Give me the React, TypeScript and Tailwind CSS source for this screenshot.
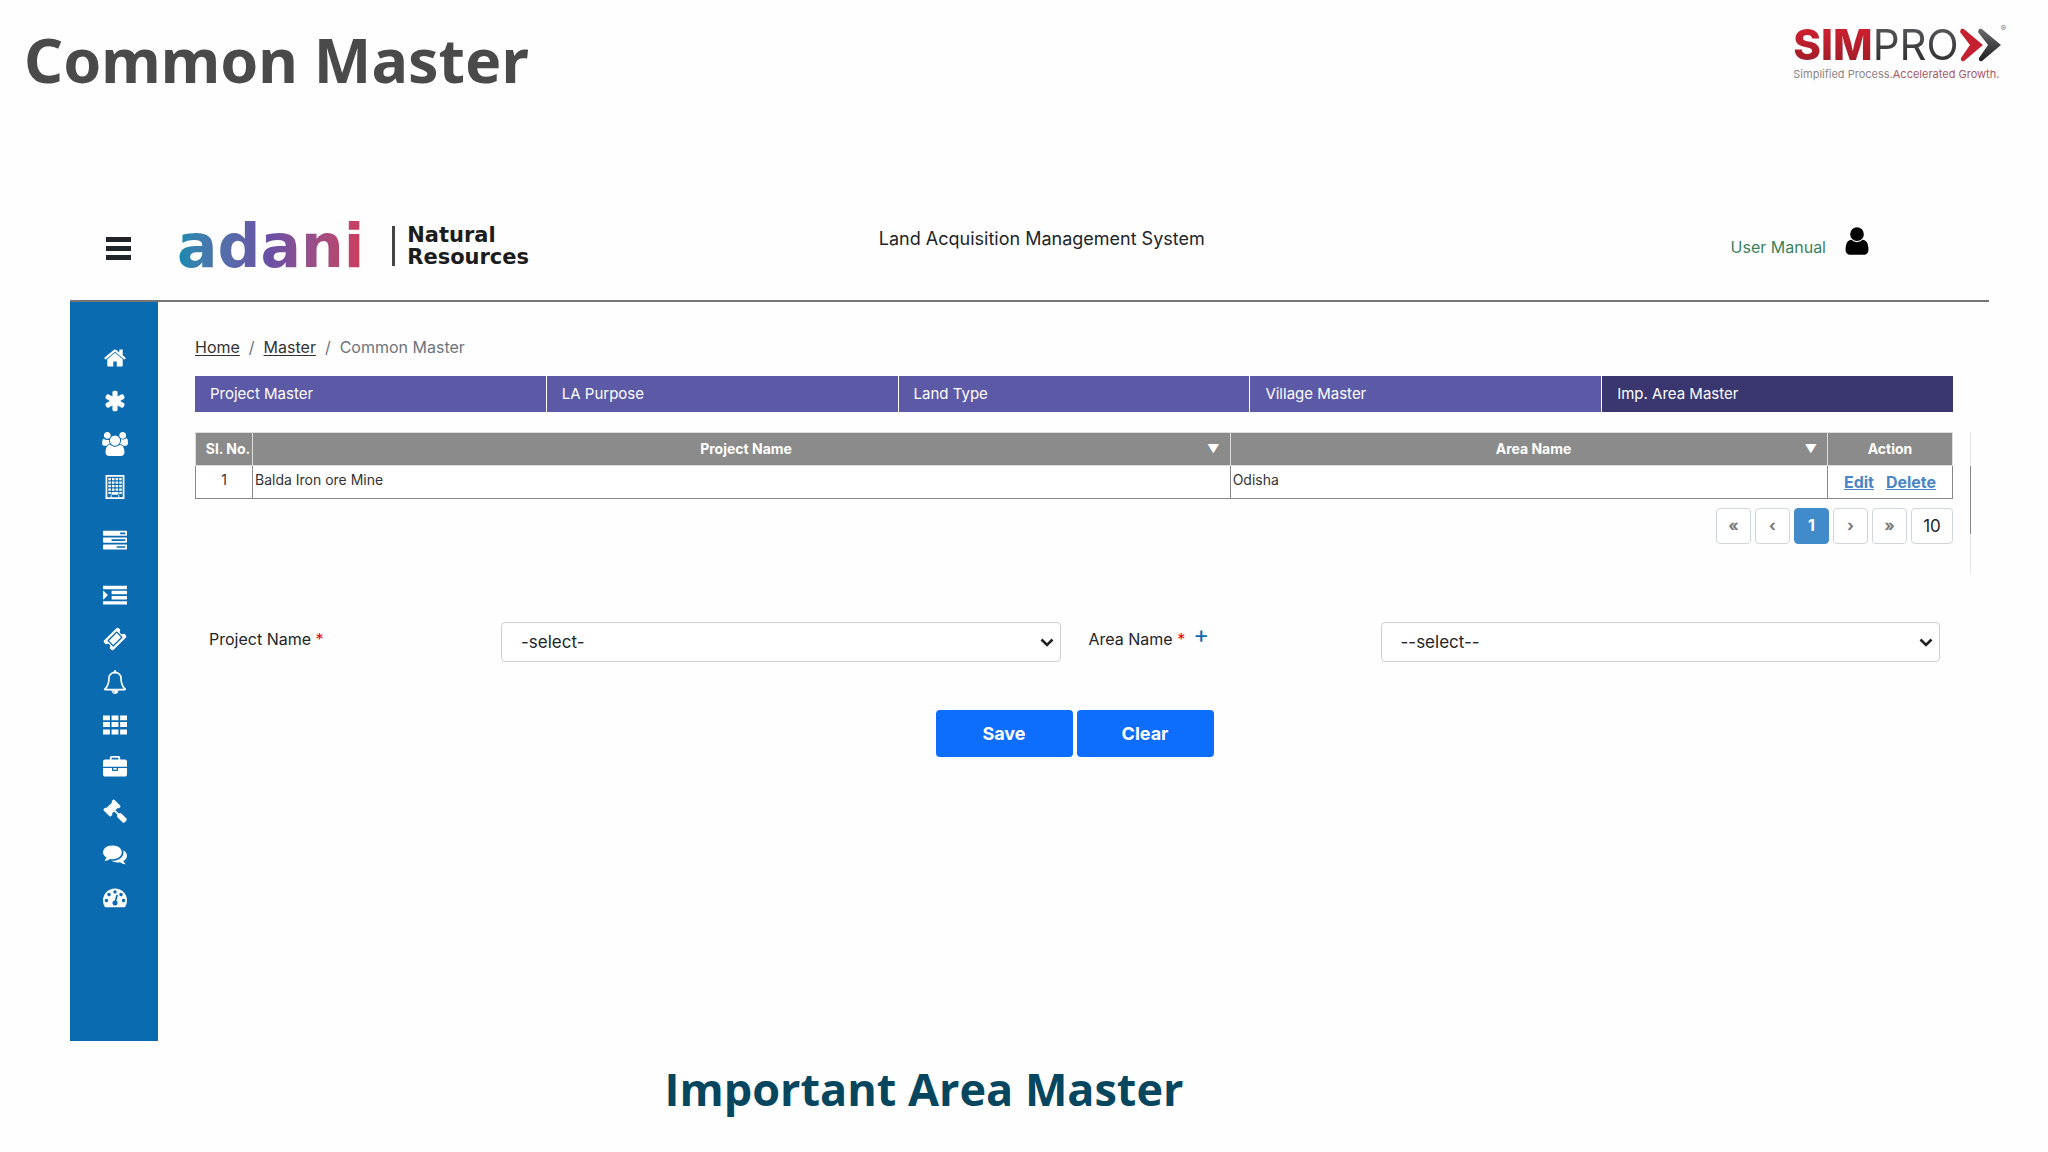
import { useState } from "react";
import clsx from "clsx";

const ICONS = {
  home: "M1472 992v480q0 26-19 45t-45 19h-384v-384h-256v384h-384q-26 0-45-19t-19-45v-480q0-1 .5-3t.5-3l575-474 575 474q1 2 1 6zm223-69l-62 74q-8 9-21 11h-3q-13 0-21-7l-692-577-692 577q-12 8-24 7-13-2-21-11l-62-74q-8-10-7-23.500t11-21.500l719-599q32-26 76-26t76 26l244 204v-195q0-14 9-23t23-9h192q14 0 23 9t9 23v408l219 182q10 8 11 21.500t-7 23.500z",
  asterisk:
    "M1546 1050q46 26 59.500 77.500t-12.500 97.500l-64 110q-26 46-77.500 59.500t-97.500-12.500l-266-153v307q0 52-38 90t-90 38h-128q-52 0-90-38t-38-90v-307l-266 153q-46 26-97.500 12.500t-77.500-59.500l-64-110q-26-46-12.500-97.500t59.500-77.500l266-154-266-154q-46-26-59.500-77.500t12.500-97.500l64-110q26-46 77.500-59.500t97.500 12.500l266 153v-307q0-52 38-90t90-38h128q52 0 90 38t38 90v307l266-153q46-26 97.500-12.500t77.500 59.500l64 110q26 46 12.500 97.500t-59.500 77.500l-266 154z",
  users:
    "M529 896q-162 5-265 128h-134q-82 0-138-40.500t-56-118.500q0-353 124-353 6 0 43.500 21t97.500 42.500 119 21.500q67 0 133-23-5 37-5 66 0 159 93 299zm1071 637q0 120-73 189.500t-194 69.500h-874q-121 0-194-69.500t-73-189.500q0-53 3.500-103.500t14-109 26.500-108.500 43-97.500 62-81 85.500-53.500 111.500-20q10 0 43 21.500t73 48 107 48 135 21.500 135-21.500 107-48 73-48 43-21.500q61 0 111.500 20t85.500 53.500 62 81 43 97.500 26.500 108.500 14 109 3.500 103.500zm-1024-1277q0 106-75 181t-181 75-181-75-75-181 75-181 181-75 181 75 75 181zm704 384q0 159-112.500 271.500t-271.500 112.500-271.500-112.500-112.500-271.500 112.500-271.500 271.500-112.500 271.500 112.500 112.500 271.500zm576 225q0 78-56 118.500t-138 40.500h-134q-103-123-265-128 93-140 93-299 0-29-5-66 66 23 133 23 59 0 119-21.500t97.500-42.500 43.500-21q124 0 124 353zm-128-609q0 106-75 181t-181 75-181-75-75-181 75-181 181-75 181 75 75 181z",
  building:
    "M192 0h1408v1792h-1408zM320 128v1536h256v-192h192v192h256v-192h192v192h256v-1536zM400 230h190v170h-190zM670 230h190v170h-190zM940 230h190v170h-190zM1210 230h190v170h-190zM400 490h190v170h-190zM670 490h190v170h-190zM940 490h190v170h-190zM1210 490h190v170h-190zM400 750h190v170h-190zM670 750h190v170h-190zM940 750h190v170h-190zM1210 750h190v170h-190zM400 1010h190v170h-190zM670 1010h190v170h-190zM940 1010h190v170h-190zM1210 1010h190v170h-190zM400 1270h190v140h-190zM1210 1270h190v140h-190zM640 1270h512v394h-128v-192h-256v192h-128z",
  tasks:
    "M1024 1408h640v-128h-640v128zm-384-512h1024v-128h-1024v128zm640-512h384v-128h-384v128zm512 832v256q0 26-19 45t-45 19h-1664q-26 0-45-19t-19-45v-256q0-26 19-45t45-19h1664q26 0 45 19t19 45zm0-512v256q0 26-19 45t-45 19h-1664q-26 0-45-19t-19-45v-256q0-26 19-45t45-19h1664q26 0 45 19t19 45zm0-512v256q0 26-19 45t-45 19h-1664q-26 0-45-19t-19-45v-256q0-26 19-45t45-19h1664q26 0 45 19t19 45z",
  indent:
    "M352 832q0 14-9 23l-288 288q-9 9-23 9-13 0-22.500-9.500t-9.500-22.500v-576q0-13 9.500-22.500t22.500-9.500q14 0 23 9l288 288q9 9 9 23zm1440 480v192q0 13-9.500 22.500t-22.500 9.500h-1728q-13 0-22.500-9.500t-9.500-22.500v-192q0-13 9.500-22.500t22.500-9.500h1728q13 0 22.500 9.500t9.500 22.500zm0-384v192q0 13-9.500 22.500t-22.500 9.500h-1088q-13 0-22.500-9.500t-9.500-22.500v-192q0-13 9.500-22.500t22.500-9.500h1088q13 0 22.500 9.500t9.500 22.500zm0-384v192q0 13-9.500 22.500t-22.500 9.500h-1088q-13 0-22.500-9.500t-9.500-22.500v-192q0-13 9.500-22.500t22.500-9.500h1088q13 0 22.500 9.500t9.500 22.500zm0-384v192q0 13-9.500 22.500t-22.500 9.500h-1728q-13 0-22.500-9.500t-9.500-22.500v-192q0-13 9.500-22.500t22.500-9.500h1728q13 0 22.500 9.500t9.500 22.500z",
  ticket:
    "M1024 452l316 316-572 572-316-316zm-211 979l618-618q19-19 19-45t-19-45l-362-362q-18-18-45-18t-45 18l-618 618q-19 19-19 45t19 45l362 362q18 18 45 18t45-18zm889-637l-907 908q-37 37-90.500 37t-90.500-37l-126-126q56-56 56-136t-56-136-136-56-136 56l-125-126q-37-37-37-90.500t37-90.500l907-906q37-37 90.500-37t90.500 37l125 125q-56 56-56 136t56 136 136 56 136-56l126 125q37 37 37 90.500t-37 90.500z",
  bell: "M912 1696q0-16-16-16-59 0-101.500-42.500t-42.500-101.500q0-16-16-16t-16 16q0 73 51.500 124.500t124.500 51.500q16 0 16-16zm-666-288h1300q-266-300-266-832 0-51-24-105t-69-103-121.500-80.500-169.500-31.500-169.500 31.500-121.500 80.500-69 103-24 105q0 532-266 832zm1482 0q0 52-38 90t-90 38h-448q0 106-75 181t-181 75-181-75-75-181h-448q-52 0-90-38t-38-90q50-42 91-88t85-119.500 74.500-158.500 50-206 19.500-260q0-152 117-282.500t307-158.500q-8-19-8-39 0-40 28-68t68-28 68 28 28 68q0 20-8 39 190 28 307 158.500t117 282.500q0 139 19.500 260t50 206 74.500 158.500 85 119.500 91 88z",
  grid: "M0 190h512v360h-512zM640 190h512v360h-512zM1280 190h512v360h-512zM0 680h512v360h-512zM640 680h512v360h-512zM1280 680h512v360h-512zM0 1240h512v360h-512zM640 1240h512v360h-512zM1280 1240h512v360h-512z",
  briefcase:
    "M640 256h512v-128h-512v128zm1152 640v480q0 66-47 113t-113 47h-1472q-66 0-113-47t-47-113v-480h672v160q0 26 19 45t45 19h320q26 0 45-19t19-45v-160h672zm-768 0v128h-256v-128h256zm768-480v384h-1792v-384q0-66 47-113t113-47h352v-160q0-40 28-68t68-28h576q40 0 68 28t28 68v160h352q66 0 113 47t47 113z",
  gavel:
    "M1771 1536q0 53-37 90l-107 108q-39 37-91 37-53 0-90-37l-363-364q-38-36-38-90 0-53 43-96l-256-256-126 126q-14 14-34 14t-34-14q2 2 12.500 12t12.500 13 10 11.500 10 13.500 6 13.500 5.500 16.500 1.500 18q0 38-28 68-3 3-16.500 18t-19 20.500-18.500 16.500-22 15.500-22 9-26 4.500q-40 0-68-28l-408-408q-28-28-28-68 0-13 4.500-26t9-22 15.500-22 16.500-18.500 20.500-19 18-16.500q30-28 68-28 10 0 18 1.500t16.500 5.500 13.500 6 13.500 10 11.500 10 13 12.500 12 12.500q-14-14-14-34t14-34l348-348q14-14 34-14t34 14q-2-2-12.500-12t-12.500-13-10-11.500-10-13.500-6-13.500-5.500-16.500-1.500-18q0-38 28-68 3-3 16.500-18t19-20.500 18.500-16.500 22-15.500 22-9 26-4.500q40 0 68 28l408 408q28 28 28 68 0 13-4.500 26t-9 22-15.500 22-16.500 18.500-20.500 19-18 16.500q-30 28-68 28-10 0-18-1.500t-16.500-5.500-13.500-6-13.500-10-11.500-10-13-12.500-12-12.500q14 14 14 34t-14 34l-126 126 256 256q43-43 96-43 52 0 91 37l363 363q37 39 37 91z",
  comments:
    "M1408 768q0 139-94 257t-256.500 186.500-353.500 68.500q-86 0-176-16-124 88-278 128-36 9-86 16h-3q-11 0-20.500-8t-11.500-21q-1-3-1-6.500t.5-6.500 2-6l2.500-5t3.500-5.500 4-5 4.500-5 4-4.500q5-6 23-25t26-29.500 22.500-29 25-38.500 20.500-44q-124-72-195-177t-71-224q0-139 94-257t256.500-186.500 353.500-68.500 353.500 68.500 256.500 186.500 94 257zm384 256q0 120-71 224.500t-195 176.500q10 24 20.500 44t25 38.500 22.500 29 26 29.500 23 25q1 1 4 4.500t4.500 5 4 5 3.500 5.500l2.500 5t2 6 .5 6.500-1 6.500q-3 14-13 22t-22 7q-50-7-86-16-154-40-278-128-90 16-176 16-271 0-472-132 58 4 88 4 161 0 309-45t264-129q125-92 192-212t67-254q0-77-23-152 129 71 204 178t75 230z",
  dashboard:
    "M384 1152q0-53-37.500-90.500t-90.500-37.500-90.500 37.500-37.500 90.500 37.500 90.500 90.500 37.500 90.500-37.500 37.500-90.500zm192-448q0-53-37.500-90.500t-90.500-37.500-90.500 37.500-37.500 90.500 37.500 90.500 90.500 37.500 90.500-37.500 37.500-90.500zm428 481l101-382q6-26-7.500-48.500t-38.500-29.500-48 6.500-30 39.500l-101 382q-60 5-107 43.500t-63 98.500q-20 77 20 146t117 89 146-20 89-117q16-60-6-117t-72-91zm660-33q0-53-37.500-90.500t-90.500-37.500-90.500 37.500-37.500 90.500 37.500 90.500 90.500 37.500 90.500-37.500 37.500-90.500zm-640-640q0-53-37.500-90.500t-90.500-37.500-90.500 37.500-37.500 90.500 37.500 90.500 90.500 37.500 90.500-37.500 37.500-90.500zm448 192q0-53-37.500-90.500t-90.500-37.500-90.500 37.500-37.500 90.500 37.500 90.500 90.500 37.500 90.500-37.500 37.500-90.500zm320 448q0 261-141 483-19 29-54 29h-1402q-35 0-54-29-141-221-141-483 0-182 71-348t191-286 286-191 348-71 348 71 286 191 191 286 71 348z",
  user: "M1536 1399q0 109-62.500 187t-150.500 78h-854q-88 0-150.500-78t-62.500-187q0-85 8.500-160.500t31.500-152 58.500-131 94-89 134.500-34.500q131 128 313 128t313-128q76 0 134.500 34.500t94 89 58.500 131 31.500 152 8.500 160.500zm-256-887q0 159-112.500 271.500t-271.500 112.500-271.500-112.500-112.500-271.500 112.500-271.500 271.500-112.500 271.500 112.500 112.500 271.500z",
};

type IconName = keyof typeof ICONS;

function Icon({ name, className }: { name: IconName; className?: string }) {
  return (
    <svg viewBox="0 0 1792 1792" className={clsx("overflow-visible fill-current", className)} aria-hidden="true">
      <path d={ICONS[name]} fillRule="evenodd" />
    </svg>
  );
}

const menu: { icon: IconName; label: string; height: string }[] = [
  { icon: "home", label: "Home", height: "h-[43px]" },
  { icon: "asterisk", label: "Master", height: "h-[43px]" },
  { icon: "users", label: "Users", height: "h-[43px]" },
  { icon: "building", label: "Projects", height: "h-[43px]" },
  { icon: "tasks", label: "Tasks", height: "h-[66px]" },
  { icon: "indent", label: "Records", height: "h-[43px]" },
  { icon: "ticket", label: "Tickets", height: "h-[43px]" },
  { icon: "bell", label: "Alerts", height: "h-[43px]" },
  { icon: "grid", label: "Modules", height: "h-[43px]" },
  { icon: "briefcase", label: "Assets", height: "h-[43px]" },
  { icon: "gavel", label: "Legal", height: "h-[43px]" },
  { icon: "comments", label: "Messages", height: "h-[43px]" },
  { icon: "dashboard", label: "Dashboard", height: "h-[43px]" },
];

const tabs = ["Project Master", "LA Purpose", "Land Type", "Village Master", "Imp. Area Master"];
const pages = ["«", "‹", "1", "›", "»"];

function SimproLogo() {
  return (
    <div className="font-[Inter,sans-serif]">
      <div className="flex h-[42px] items-center text-[42px] leading-[42px]">
        <span className="bg-linear-to-b from-[#d3202f] to-[#9c1c28] bg-clip-text font-extrabold text-transparent">SIM</span>
        <span className="bg-linear-to-b from-[#5a5a5c] to-[#2c2c2e] bg-clip-text text-transparent">PRO</span>
        <svg viewBox="0 0 42 34" className="h-[34px] w-[42px]" aria-hidden="true">
          <defs>
            <linearGradient id="chev" x1="0" y1="0" x2="0" y2="1">
              <stop offset="0" stopColor="#6a6a6c" />
              <stop offset="1" stopColor="#1f1f21" />
            </linearGradient>
          </defs>
          <path d="M2 1q2-1 4 1l18 15L5 33q-2 1-3-1v-2l9-13L1 4z" fill="#c4202f" />
          <path d="M20 1q2-1 4 1l18 15-19 16q-2 1-3-1v-2l9-13L19 4z" fill="url(#chev)" />
        </svg>
        <span className="self-start text-[8px] leading-none text-gray-500">®</span>
      </div>
      <p className="text-[11px] leading-4 text-[#8b8587]">
        Simplified Process.<span className="text-[#a4586a]">Accelerated Growth.</span>
      </p>
    </div>
  );
}

function AdaniLogo() {
  return (
    <div className="flex items-center font-['DejaVu_Sans',sans-serif] font-bold">
      <span className="bg-linear-to-r from-[#0a8bb0] via-[#6a4fa5] to-[#cf3a5c] bg-clip-text text-[60px] leading-[60px] text-transparent">
        adani
      </span>
      <span className="ml-7 h-10 w-[3px] bg-[#444]" />
      <span className="ml-3 text-[21px] leading-[22px] text-[#1c1c1c]">
        Natural
        <br />
        Resources
      </span>
    </div>
  );
}

function SelectBox({ id, placeholder }: { id: string; placeholder: string }) {
  return (
    <div className="relative min-w-0 flex-1">
      <select id={id} className="h-10 w-full appearance-none rounded-sm border border-[#ced0d6] bg-white px-[19px] pt-0.5 text-[17px]">
        <option>{placeholder}</option>
      </select>
      <svg viewBox="0 0 14 9" className="pointer-events-none absolute top-4 right-[7px] h-[9px] w-3.5" aria-hidden="true">
        <path d="M1.500 1.500L7 7l5.500-5.500" fill="none" stroke="#222" strokeWidth="2.600" />
      </svg>
    </div>
  );
}

export default function App() {
  const [activeTab, setActiveTab] = useState("Imp. Area Master");

  return (
    <div className="min-h-screen bg-[#fefefe] font-[Inter,sans-serif] text-[#212529]">
      <div className="flex h-[200px] items-start justify-between pt-6 pr-[42px] pl-6">
        <h1 className="font-['Noto_Sans',sans-serif] text-[61px] leading-[72px] font-bold text-[#4a4a4a]">Common Master</h1>
        <SimproLogo />
      </div>

      <div className="mr-[59px] ml-[70px]">
        <header className="flex h-[102px] items-start border-b-2 border-[#757575] pt-4 pl-9">
          <button type="button" aria-label="Toggle menu" className="mt-[21px] flex w-[25px] flex-col gap-1">
            <span className="h-[5px] bg-[#212529]" />
            <span className="h-[5px] bg-[#212529]" />
            <span className="h-[5px] bg-[#212529]" />
          </button>
          <div className="ml-[46px] w-[370px]">
            <AdaniLogo />
          </div>
          <p className="flex-1 pt-[9px] pr-[194px] text-center text-[18px] leading-7">Land Acquisition Management System</p>
          <a href="#manual" className="mt-[19px] text-[16px] leading-6 text-[#3a825c]">
            User Manual
          </a>
          <button type="button" aria-label="Account" className="mt-[9px] mr-[116px] ml-[15px]">
            <Icon name="user" className="size-8 text-black" />
          </button>
        </header>

        <div className="flex">
          <nav className="h-[739px] w-[88px] shrink-0 bg-[#0b6bb0] pt-[34px]">
            {menu.map((item) => (
              <a
                key={item.icon}
                href={"#" + item.icon}
                aria-label={item.label}
                className={clsx("flex items-center justify-center pl-0.5 text-white", item.height)}
              >
                <Icon name={item.icon} className="size-6" />
              </a>
            ))}
          </nav>

          <main className="min-w-0 flex-1 pt-[33px] pr-[18px] pl-[37px]">
            <div className="pr-[18px]">
              <nav className="flex gap-[9px] text-[16px] leading-6 text-[#6c757d]">
                <a href="#home" className="text-[#333] underline underline-offset-2">
                  Home
                </a>
                <span>/</span>
                <a href="#master" className="text-[#333] underline underline-offset-2">
                  Master
                </a>
                <span>/</span>
                <span>Common Master</span>
              </nav>

              <div className="mt-[17px] grid grid-cols-5 gap-px">
                {tabs.map((tab) => (
                  <button
                    key={tab}
                    type="button"
                    onClick={() => setActiveTab(tab)}
                    className={clsx(
                      "h-9 px-[15px] text-left text-[15px] text-white",
                      tab === activeTab ? "bg-[#393670]" : "bg-[#5c59a6]"
                    )}
                  >
                    {tab}
                  </button>
                ))}
              </div>
            </div>

            <div className="mt-5 flex">
              <div className="min-w-0 flex-1 pr-[17px] pb-[30px]">
                <table className="w-full table-fixed border-collapse text-[14px] leading-5">
                  <colgroup>
                    <col className="w-[57px]" />
                    <col />
                    <col className="w-[34%]" />
                    <col className="w-[125px]" />
                  </colgroup>
                  <thead>
                    <tr className="h-[33px] bg-[#8a8b8a] text-white">
                      <th className="border border-[#ddd] pl-2 whitespace-nowrap">Sl. No.</th>
                      <th className="border border-[#ddd]">
                        <div className="flex items-center">
                          <span className="flex-1 pl-8">Project Name</span>
                          <span className="mr-2.5 text-[12px]">▼</span>
                        </div>
                      </th>
                      <th className="border border-[#ddd]">
                        <div className="flex items-center">
                          <span className="flex-1 pl-8">Area Name</span>
                          <span className="mr-2.5 text-[12px]">▼</span>
                        </div>
                      </th>
                      <th className="border border-[#ddd]">Action</th>
                    </tr>
                  </thead>
                  <tbody>
                    <tr className="h-[33px] bg-white text-[#333]">
                      <td className="border border-[#888] pb-1 text-center">1</td>
                      <td className="border border-[#888] pb-1 pl-0.5">Balda Iron ore Mine</td>
                      <td className="border border-[#888] pb-1 pl-0.5">Odisha</td>
                      <td className="border border-[#888] text-center text-[16px] font-bold text-[#4a86c5]">
                        <a href="#edit" className="underline">
                          Edit
                        </a>
                        <a href="#delete" className="ml-3 underline">
                          Delete
                        </a>
                      </td>
                    </tr>
                  </tbody>
                </table>

                <div className="mt-[9px] flex justify-end gap-1">
                  {pages.map((p) => (
                    <button
                      key={p}
                      type="button"
                      className={clsx(
                        "h-9 w-[35px] rounded-sm border pb-0.5 text-[16px] font-bold",
                        p === "1" ? "border-[#428bca] bg-[#428bca] text-white" : "border-gray-300 bg-white text-[#777]"
                      )}
                    >
                      {p}
                    </button>
                  ))}
                  <input
                    aria-label="Rows per page"
                    defaultValue="10"
                    className="h-9 w-[42px] rounded-sm border border-gray-300 bg-white text-center text-[17px]"
                  />
                </div>
              </div>
              {/* scroll track with its thumb */}
              <div className="w-px bg-gray-200 pt-[34px]">
                <div className="h-[68px] bg-[#888]" />
              </div>
            </div>

            <form className="mt-12 pr-[31px] pl-3.5" onSubmit={(e) => e.preventDefault()}>
              <div className="grid grid-cols-2 gap-x-7">
                <div className="flex">
                  <label htmlFor="project" className="w-[292px] shrink-0 pt-[5px] text-[16px] leading-6">
                    Project Name <span className="text-red-600">*</span>
                  </label>
                  <SelectBox id="project" placeholder="-select-" />
                </div>
                <div className="flex">
                  <div className="flex w-[292px] shrink-0 items-start gap-2 pt-[5px] text-[16px] leading-6">
                    <label htmlFor="area">
                      Area Name <span className="text-red-600">*</span>
                    </label>
                    <button type="button" aria-label="Add area" className="text-[24px] leading-4 text-[#0b6bb0]">
                      +
                    </button>
                  </div>
                  <SelectBox id="area" placeholder="--select--" />
                </div>
              </div>

              <div className="mt-12 flex justify-center gap-1">
                <button type="submit" className="h-[47px] w-[137px] rounded bg-[#0d6efd] text-[18px] font-bold text-white">
                  Save
                </button>
                <button type="reset" className="h-[47px] w-[137px] rounded bg-[#0d6efd] text-[18px] font-bold text-white">
                  Clear
                </button>
              </div>
            </form>
          </main>
        </div>
      </div>

      <h2 className="mt-4 pr-[200px] text-center font-['Open_Sans',sans-serif] text-[45px] leading-[64px] font-bold text-[#07465f]">
        Important Area Master
      </h2>
    </div>
  );
}
